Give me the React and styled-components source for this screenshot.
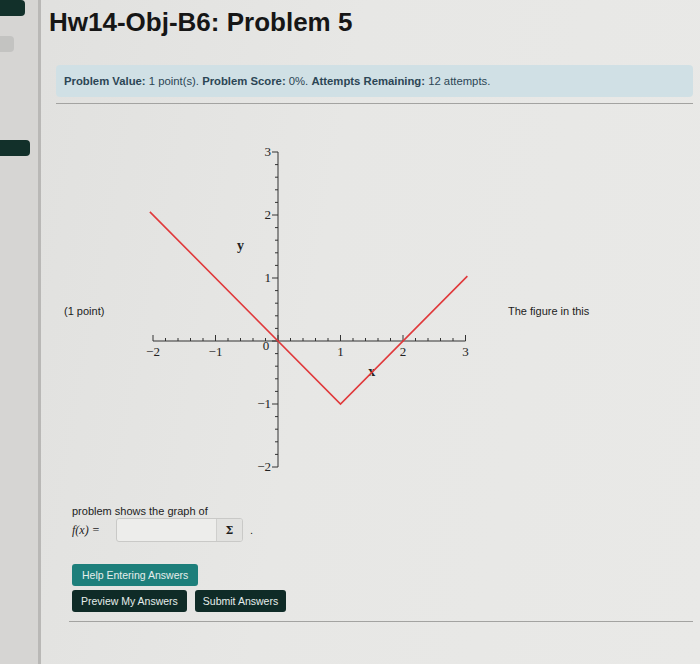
import { createGlobalStyle, styled } from "styled-components"

const GlobalStyle = createGlobalStyle`
  html, body {
    margin: 0;
    padding: 0;
    background: #e3e3e1;
  }
  body {
    font-family: "Liberation Sans", Arial, sans-serif;
    color: #1c1c1c;
  }
`

const Page = styled.div`
  display: flex;
  width: 700px;
  height: 664px;
  overflow: hidden;
  background: linear-gradient(100deg, #e0e0de 0%, #e7e7e5 45%, #e9e9e7 100%);
`

const Sidebar = styled.div`
  width: 38px;
  flex-shrink: 0;
  display: flex;
  flex-direction: column;
  align-items: flex-start;
  background: #d6d5d3;
  border-right: 3px solid #b9b8b6;
`

const NavBlock = styled.div`
  width: ${(p) => p.$w}px;
  height: ${(p) => p.$h}px;
  margin-top: ${(p) => p.$top}px;
  background: ${(p) => p.$bg};
  border-radius: 0 4px 4px 0;
`

const Main = styled.div`
  flex: 1;
  padding: 0 7px 0 8px;
`

const Title = styled.h1`
  margin: 6px 0 0;
  font-size: 26px;
  line-height: 32px;
  font-weight: bold;
  color: #161616;
`

const Body = styled.div`
  padding-left: 7px;
`

const InfoBox = styled.div`
  margin-top: 27px;
  height: 32px;
  padding: 0 8px;
  display: flex;
  align-items: center;
  background: #d0e0e5;
  border-radius: 4px;
  font-size: 11.3px;
  color: #2c4655;

  b {
    font-weight: bold;
  }
`

const Rule = styled.div`
  height: 1px;
  background: #a3a3a1;
  margin-top: ${(p) => p.$top}px;
  margin-left: ${(p) => p.$left || 0}px;
`

const GraphRow = styled.div`
  display: flex;
  align-items: center;
  margin-top: 26px;
`

const SideText = styled.div`
  font-size: 11px;
  margin-top: 14px;
  width: ${(p) => p.$w}px;
  padding-left: ${(p) => p.$pad}px;
  box-sizing: border-box;
  flex-shrink: 0;
`

const Form = styled.div`
  padding-left: 16px;
  margin-top: 26px;
  font-size: 11px;
`

const Line = styled.div`
  line-height: 14px;
`

const AnswerRow = styled.div`
  display: flex;
  align-items: center;
  gap: 7px;
`

const FxLabel = styled.span`
  font-family: "Liberation Serif", "Times New Roman", serif;
  font-style: italic;
  font-size: 12px;
  width: 37px;
`

const InputBox = styled.div`
  display: flex;
  width: 125px;
  height: 22px;
  border: 1px solid #c9c9c7;
  border-radius: 3px;
  background: #ededeb;
  overflow: hidden;
`

const Field = styled.div`
  flex: 1;
`

const Sigma = styled.div`
  width: 25px;
  display: flex;
  align-items: center;
  justify-content: center;
  border-left: 1px solid #cfcfcd;
  background: #e2e2e0;
  font-family: "DejaVu Serif", serif;
  font-weight: bold;
  font-size: 11px;
`

const Buttons = styled.div`
  margin-top: 22px;
  display: flex;
  flex-direction: column;
  gap: 4px;
`

const ButtonRow = styled.div`
  display: flex;
  align-items: flex-start;
  gap: 8px;
`

const Button = styled.div`
  height: 22px;
  padding: 0 ${(p) => p.$pad}px;
  display: flex;
  align-items: center;
  border-radius: 3px;
  font-size: 10.5px;
  color: #e6eeec;
  background: ${(p) => (p.$teal ? "#1d7f7b" : "#0f2b27")};
`

const unitX = 62.5
const unitY = 63
const ox = 139
const oy = 211
const px = (x) => ox + x * unitX
const py = (y) => oy - y * unitY

const range = (a, b) => {
  const out = []
  for (let i = Math.round(a * 5); i <= Math.round(b * 5); i++) out.push(i / 5)
  return out
}

const Graph = () => {
  const xs = range(-2, 3)
  const ys = range(-2, 3)
  const isMajor = (v) => Math.abs(v - Math.round(v)) < 1e-6
  const f = (x) => Math.abs(x - 1) - 1
  const pts = [-2.05, 1, 3.03].map((x) => `${px(x)},${py(f(x))}`).join(" ")
  const label = { fontFamily: "'Liberation Serif', 'Times New Roman', serif", fontSize: 13, fill: "#222" }
  return (
    <svg width="340" height="348" viewBox="0 0 340 348">
      <line x1={px(-2)} y1={oy} x2={px(3)} y2={oy} stroke="#333" strokeWidth="1" />
      <line x1={ox} y1={py(3)} x2={ox} y2={py(-2)} stroke="#333" strokeWidth="1" />
      {xs.map((x) => (
        <line key={"xt" + x} x1={px(x)} y1={oy} x2={px(x)} y2={oy - (isMajor(x) ? 6 : 3)} stroke="#333" strokeWidth="1" />
      ))}
      {ys.map((y) => (
        <line key={"yt" + y} x1={ox} y1={py(y)} x2={ox - (isMajor(y) ? 6 : 3)} y2={py(y)} stroke="#333" strokeWidth="1" />
      ))}
      {[-2, -1, 1, 2, 3].map((x) => (
        <text key={"xl" + x} x={px(x)} y={oy + 15} textAnchor="middle" {...label}>
          {x < 0 ? "\u2212" + -x : x}
        </text>
      ))}
      <text x={ox - 12} y={oy + 9} textAnchor="middle" {...label}>0</text>
      {[-2, -1, 1, 2, 3].map((y) => (
        <text key={"yl" + y} x={ox - 7} y={py(y) + 4} textAnchor="end" {...label}>
          {y < 0 ? "\u2212" + -y : y}
        </text>
      ))}
      <text x={px(-0.6)} y={py(1.45)} textAnchor="middle" {...label} fontSize="14" fontWeight="bold">y</text>
      <text x={px(1.5)} y={py(-0.55)} textAnchor="middle" {...label} fontSize="14" fontWeight="bold">x</text>
      <polyline points={pts} fill="none" stroke="#e0393b" strokeWidth="1.6" />
    </svg>
  )
}

const App = () => {
  return (
    <Page>
      <GlobalStyle />
      <Sidebar>
        <NavBlock $w={25} $h={16} $top={0} $bg="#12302a" />
        <NavBlock $w={14} $h={16} $top={20} $bg="#c3c3c1" />
        <NavBlock $w={30} $h={16} $top={88} $bg="#12302a" />
      </Sidebar>
      <Main>
        <Title>Hw14-Obj-B6: Problem 5</Title>
        <Body>
          <InfoBox>
            <span>
              <b>Problem Value:</b> 1 point(s). <b>Problem Score:</b> 0%. <b>Attempts Remaining:</b> 12 attempts.
            </span>
          </InfoBox>
          <Rule $top={6} />
          <GraphRow>
            <SideText $w={83} $pad={8}>(1 point)</SideText>
            <Graph />
            <SideText $w={160} $pad={29}>The figure in this</SideText>
          </GraphRow>
          <Form>
            <Line>problem shows the graph of</Line>
            <AnswerRow>
              <FxLabel>f(x) =</FxLabel>
              <InputBox>
                <Field />
                <Sigma>Σ</Sigma>
              </InputBox>
              <span>.</span>
            </AnswerRow>
            <Buttons>
              <ButtonRow>
                <Button $teal $pad={10}>Help Entering Answers</Button>
              </ButtonRow>
              <ButtonRow>
                <Button $pad={9}>Preview My Answers</Button>
                <Button $pad={8}>Submit Answers</Button>
              </ButtonRow>
            </Buttons>
          </Form>
          <Rule $top={9} $left={13} />
        </Body>
      </Main>
    </Page>
  )
}

export default App
